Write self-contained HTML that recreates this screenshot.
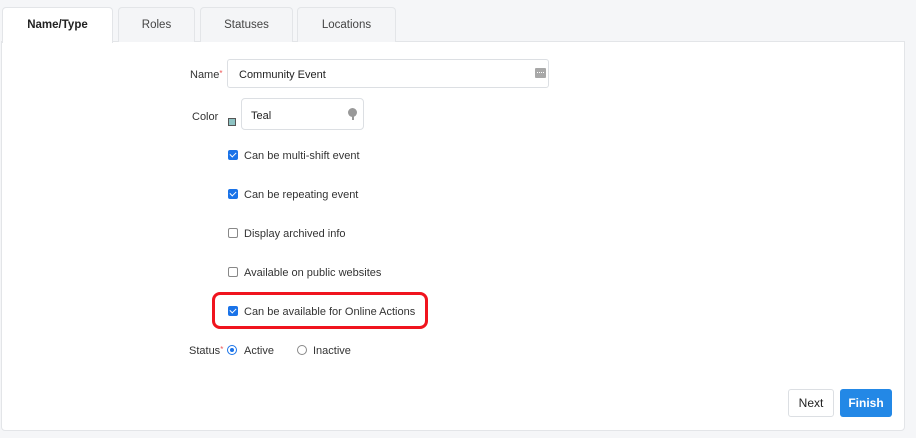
<!DOCTYPE html>
<html><head><meta charset="utf-8"><style>
*{box-sizing:border-box;margin:0;padding:0}
body{width:916px;height:438px;background:#f5f6f8;font-family:"Liberation Sans",sans-serif;font-size:12px;color:#333;position:relative;overflow:hidden}
.a{position:absolute}
.tab{position:absolute;top:7px;height:35px;border:1px solid #e3e5e8;border-bottom:none;border-radius:4px 4px 0 0;background:#f4f5f7;text-align:center;line-height:35px;font-size:11.5px;color:#444}
.panel{position:absolute;left:1px;top:41px;width:904px;height:390px;background:#fff;border:1px solid #e3e5e8;border-radius:0 0 4px 4px}
.cb{position:absolute;width:10px;height:10px;border-radius:2px}
.on{background:#1a73e8}
.on:after{content:"";position:absolute;left:3px;top:1px;width:3px;height:5px;border:solid #fff;border-width:0 1.5px 1.5px 0;transform:rotate(45deg)}
.off{border:1px solid #888;background:#fff}
.lbl{position:absolute;font-size:11px;color:#333}
.req{color:#e55;font-size:8px;vertical-align:top}
</style></head><body>
<div class="panel"></div>
<div class="tab" style="left:2px;width:111px;background:#fff;height:36px;font-weight:bold;color:#222">Name/Type</div>
<div class="tab" style="left:118px;width:77px">Roles</div>
<div class="tab" style="left:200px;width:93px">Statuses</div>
<div class="tab" style="left:297px;width:99px">Locations</div>

<div class="lbl" style="left:190px;top:69px">Name<span class="req">*</span></div>
<div class="a" style="left:227px;top:59px;width:322px;height:29px;border:1px solid #dcdfe3;border-radius:3px"></div>
<div class="lbl" style="left:239px;top:69px;color:#222">Community Event</div>
<div class="a" style="left:535px;top:68px;width:11px;height:10px;background:#a8a8a8;border-radius:1px"></div>
<div class="a" style="left:537px;top:72px;width:7px;height:2px;border-top:1px dotted #fff"></div>

<div class="lbl" style="left:192px;top:111px">Color</div>
<div class="a" style="left:228px;top:118px;width:8px;height:8px;background:#8ec3c3;border:1px solid #555"></div>
<div class="a" style="left:241px;top:98px;width:123px;height:32px;border:1px solid #dcdfe3;border-radius:4px"></div>
<div class="lbl" style="left:251px;top:110px;color:#222">Teal</div>
<div class="a" style="left:348px;top:108px;width:9px;height:9px;background:#999;border-radius:50%"></div>
<div class="a" style="left:352px;top:115px;width:2px;height:5px;background:#999"></div>

<div class="cb on" style="left:228px;top:150px"></div><div class="lbl" style="left:244px;top:150px">Can be multi-shift event</div>
<div class="cb on" style="left:228px;top:189px"></div><div class="lbl" style="left:244px;top:189px">Can be repeating event</div>
<div class="cb off" style="left:228px;top:228px"></div><div class="lbl" style="left:244px;top:228px">Display archived info</div>
<div class="cb off" style="left:228px;top:267px"></div><div class="lbl" style="left:244px;top:267px">Available on public websites</div>
<div class="a" style="left:212px;top:292px;width:216px;height:37px;border:3px solid #f0141e;border-radius:8px"></div>
<div class="cb on" style="left:228px;top:306px"></div><div class="lbl" style="left:244px;top:306px">Can be available for Online Actions</div>

<div class="lbl" style="left:189px;top:345px">Status<span class="req">*</span></div>
<div class="a" style="left:227px;top:345px;width:10px;height:10px;border:1px solid #1a73e8;border-radius:50%"></div>
<div class="a" style="left:230px;top:348px;width:4px;height:4px;background:#1a73e8;border-radius:50%"></div>
<div class="lbl" style="left:244px;top:345px">Active</div>
<div class="a" style="left:297px;top:345px;width:10px;height:10px;border:1px solid #888;border-radius:50%"></div>
<div class="lbl" style="left:313px;top:345px">Inactive</div>

<div class="a" style="left:788px;top:389px;width:46px;height:28px;border:1px solid #dcdfe3;border-radius:3px;text-align:center;line-height:26px;font-size:12px;color:#222">Next</div>
<div class="a" style="left:840px;top:389px;width:52px;height:28px;background:#2388e6;border-radius:3px;text-align:center;line-height:28px;font-size:12px;color:#fff;font-weight:bold">Finish</div>
</body></html>
